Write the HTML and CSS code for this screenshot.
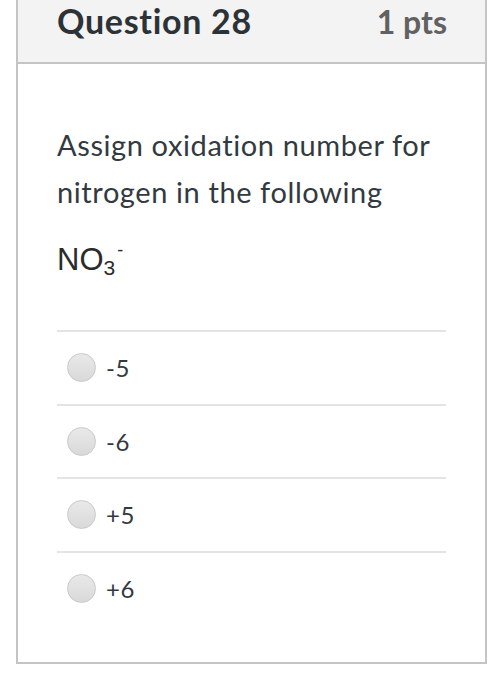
FILE: index.html
```html
<!DOCTYPE html>
<html lang="en">
<head>
<meta charset="utf-8">
<title>Question 28</title>
<link rel="stylesheet" href="styles.css">
</head>
<body>
<div class="card">
  <div class="card-header">
    <h2 class="q-title">Question 28</h2>
    <span class="q-points">1 pts</span>
  </div>
  <div class="card-body">
    <p class="q-text">Assign oxidation number for nitrogen in the following</p>
    <p class="formula">NO<sub>3</sub><sup>-</sup></p>
    <ul class="answers">
      <li class="answer"><span class="radio"></span><span class="label">-5</span></li>
      <li class="answer"><span class="radio"></span><span class="label">-6</span></li>
      <li class="answer"><span class="radio"></span><span class="label">+5</span></li>
      <li class="answer"><span class="radio"></span><span class="label">+6</span></li>
    </ul>
  </div>
</div>
</body>
</html>
```
FILE: styles.css
```css
html, body {
  margin: 0;
  padding: 0;
  background: #ffffff;
}
body {
  font-family: Lato, "Liberation Sans", sans-serif;
  color: #2d3b45;
  font-variant-ligatures: none;
}
.card {
  margin-left: 16px;
  width: 467px;
  border: 2px solid #c4c4c4;
  border-top: none;
  background: #ffffff;
}
.card-header {
  height: 61px;
  background: #f3f3f3;
  border-bottom: 2px solid #c4c4c4;
  display: flex;
  justify-content: space-between;
  align-items: baseline;
  padding: 1px 38px 0 39px;
}
.q-title {
  margin: 0;
  font-size: 34px;
  letter-spacing: 0.7px;
  line-height: 40px;
  font-weight: 700;
  color: #2d3236;
}
.q-points {
  font-size: 32px;
  line-height: 40px;
  font-weight: 700;
  color: #616161;
}
.card-body {
  padding: 57px 39px 38px 39px;
}
.q-text {
  margin: 0;
  font-size: 29px;
  letter-spacing: 0.6px;
  line-height: 47px;
  color: #333a3f;
}
.formula {
  margin: 28px 0 0 0;
  font-family: "Liberation Sans", Arial, sans-serif;
  font-size: 31px;
  line-height: 34px;
  color: #2b2b2b;
}
.formula sub {
  font-size: 21px;
  line-height: 0;
  vertical-align: -5px;
}
.formula sup {
  font-size: 18px;
  line-height: 0;
  vertical-align: 14px;
  margin-left: 2px;
}
.answers {
  list-style: none;
  margin: 53px 0 0 0;
  padding: 0;
}
.answer {
  height: 71.5px;
  border-top: 2px solid #e4e4e4;
  display: flex;
  align-items: center;
  padding-left: 10px;
  gap: 10px;
}
.radio {
  width: 27px;
  height: 27px;
  border-radius: 50%;
  border: 1px solid #c9c9c9;
  background: linear-gradient(#e9e9e9, #d9d9d9);
  flex: none;
}
.label {
  font-size: 24px;
  letter-spacing: 0.6px;
  color: #333a3f;
}
```
